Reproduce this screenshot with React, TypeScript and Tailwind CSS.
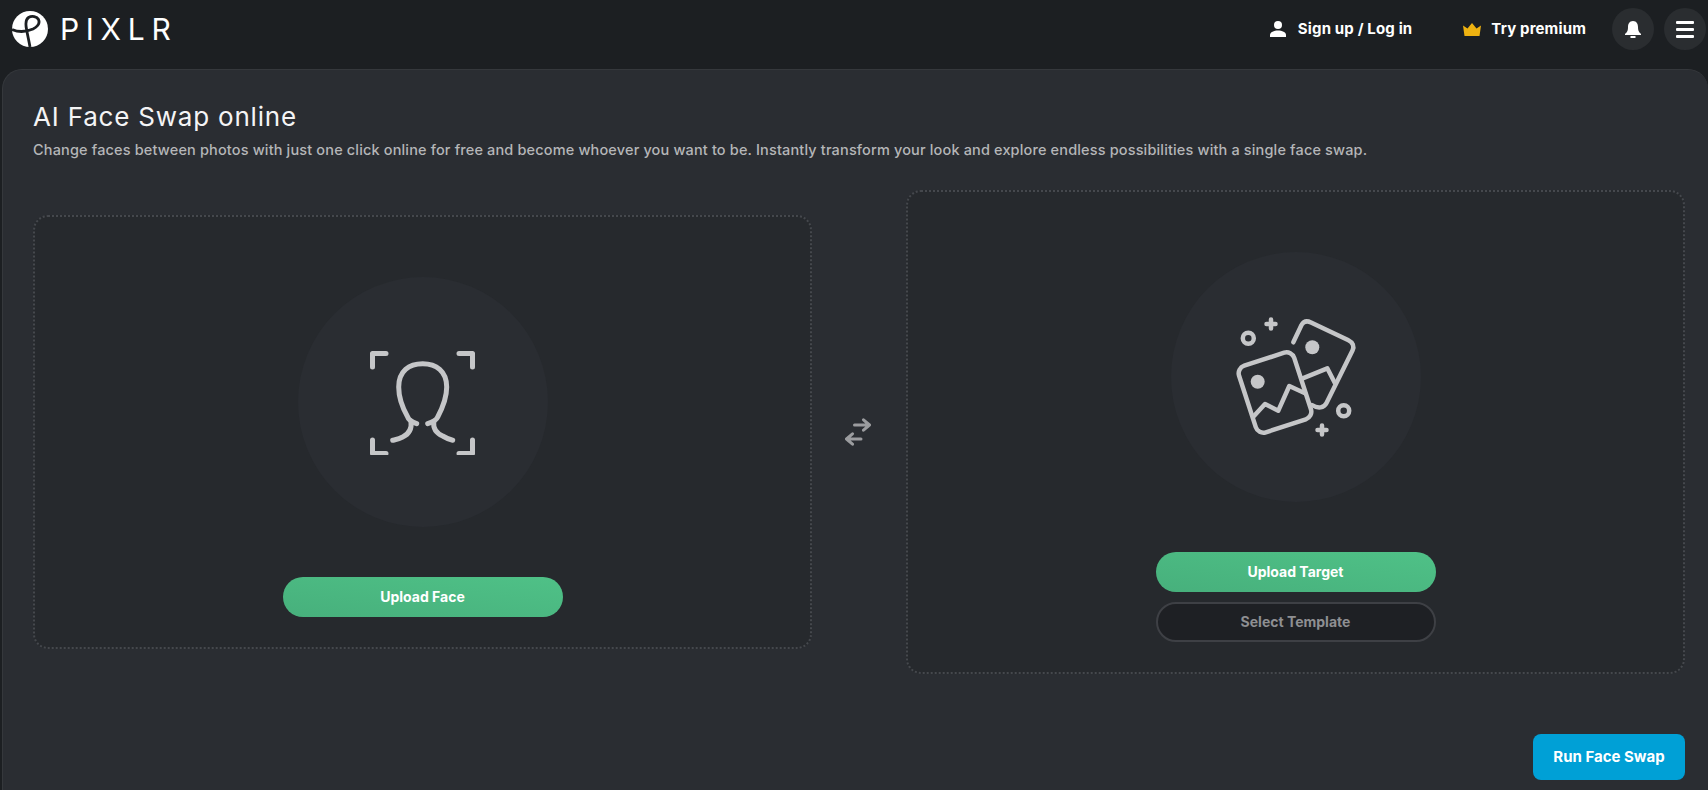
function PixlrLogo() {
  return (
    <svg width="36" height="36" viewBox="0 0 36 36" className="shrink-0">
      <circle cx="18" cy="18" r="18" fill="#fff" />
      <path d="M0 18.500C8 22 15 20.500 21 18C26 15.500 28 12 26.500 8.500C25 5.500 20 4.500 16.500 6.500C13.500 8.500 13.500 13 14.500 18C15.500 24 17 30 18 36" fill="none" stroke="#1c1f22" strokeWidth="2.800" />
    </svg>
  );
}

function FaceIcon() {
  return (
    <svg width="105" height="105" viewBox="0 -1 105 105" fill="none" stroke="#c5c6c8" strokeWidth="5" strokeLinecap="round" strokeLinejoin="round">
      <path d="M2.500 16V2.500H16M89 2.500H102.500V16M2.500 89V102.500H16M89 102.500H102.500V89" />
      <path d="M46.700 72.700C42 71 38.500 69 37.700 66C32 56 28.700 46 28.700 36C28.700 20 39 12.700 52.700 12.700C66 12.700 76.700 20 76.700 36C76.700 46 73 56 67.700 66C66.500 69 63 71 57.700 72.700" />
      <path d="M41 70C42 78 39 83 32.700 86C29 88 26 88.500 22.700 89.300M63.700 71C63 78 66 82 72.700 85C76 87 79 88.500 82.700 89.300" />
    </svg>
  );
}

function ImagesIcon() {
  return (
    <svg width="160" height="150" viewBox="6 2 160 150" fill="none" stroke="#c5c6c8" strokeWidth="4.500" strokeLinecap="round" strokeLinejoin="round">
      <circle cx="38.300" cy="38.300" r="5.500" />
      <path d="M61 19.500V28.500M56.500 24H65.500" strokeWidth="4.500" />
      <rect x="-29" y="-35" width="58" height="70" rx="8" transform="translate(65 92.500) rotate(-18)" />
      <circle cx="47.700" cy="81.700" r="7" fill="#c5c6c8" stroke="none" />
      <path d="M43.300 116.700L55 104L68.300 110.700L79.300 86L95 93.300" />
      <path d="M83.300 42.300L91.500 25C93.500 21.500 97 20.500 101 22.500L138 40C143 42.500 144.500 46.500 142.500 50.500L116.500 103C114 108 108 109 102 105" />
      <circle cx="102.300" cy="47.300" r="7" fill="#c5c6c8" stroke="none" />
      <path d="M92.700 78.300L117.300 68.300L125 83.300" />
      <circle cx="133.700" cy="110.700" r="5.500" />
      <path d="M112 125.500V134.500M107.500 130H116.500" strokeWidth="4.500" />
    </svg>
  );
}

function SwapArrows() {
  return (
    <svg width="26" height="28" viewBox="0 0 26 28" fill="none" stroke="#9b9c9f" strokeWidth="3" strokeLinecap="round" strokeLinejoin="round">
      <path d="M9.500 7H24.500M18.500 1.800L24.500 7L18.500 12.200" />
      <path d="M16 21H1.500M7.500 15.800L1.500 21L7.500 26.200" />
    </svg>
  );
}

export default function App() {
  return (
    <div className="h-[790px] overflow-hidden bg-[#1c1f22] font-['Inter',sans-serif]">
      <header className="h-[69px] flex items-start justify-between pr-[2px]">
        <div className="flex items-center pl-3 pt-[11px]">
          <PixlrLogo />
          <span className="ml-[12px] text-[30px] leading-[36px] font-normal tracking-[6.700px] text-white">PIXLR</span>
        </div>
        <div className="flex items-center pt-2">
          <div className="flex items-center gap-[12px] mr-[51px]">
            <svg width="16" height="16" viewBox="0 0 16 16" fill="#fff">
              <circle cx="8" cy="4" r="4" />
              <path d="M0 16V14C0 11 4 9.500 8 9.500C12 9.500 16 11 16 14V16Z" />
            </svg>
            <span className="text-[15px] tracking-[0.150px] font-bold text-white">Sign up / Log in</span>
          </div>
          <div className="flex items-center gap-[10px] mr-[26px]">
            <svg width="18" height="13" viewBox="0 0 18 13" fill="#eeb211">
              <path d="M0 2.500L4.500 5.500L9 0L13.500 5.500L18 2.500L16.500 13H1.500Z" />
            </svg>
            <span className="text-[15px] tracking-[0.150px] font-bold text-white">Try premium</span>
          </div>
          <div className="w-[42px] h-[42px] rounded-full bg-[#2a2d30] flex items-center justify-center mr-[10px]">
            <svg width="16" height="17" viewBox="0 0 16 17" fill="#fff">
              <path d="M8 0C11.500 0 13 3 13 6C13 10 14 11 16 13V14H0V13C2 11 3 10 3 6C3 3 4.500 0 8 0Z" />
              <rect x="5.500" y="15" width="5" height="2" />
            </svg>
          </div>
          <div className="w-[42px] h-[42px] rounded-full bg-[#2a2d30] flex items-center justify-center">
            <div className="w-[18px] flex flex-col gap-[4px]">
              <div className="h-[3px] bg-white rounded-[1px]" />
              <div className="h-[3px] bg-white rounded-[1px]" />
              <div className="h-[3px] bg-white rounded-[1px]" />
            </div>
          </div>
        </div>
      </header>

      <main className="ml-[2px] h-[721px] rounded-t-[20px] border border-b-0 border-r-0 border-[#35383c] bg-[#2a2d32] pl-[30px] pr-[23px] pt-[31px]">
        <h1 className="text-[26px] leading-[32px] tracking-[0.800px] font-normal text-[#f4f4f5]">AI Face Swap online</h1>
        <p className="mt-[7px] text-[14.500px] tracking-[0.150px] leading-[20px] font-medium text-[#b5b6b8]">
          Change faces between photos with just one click online for free and become whoever you want to be. Instantly transform your look and explore endless possibilities with a single face swap.
        </p>

        <div className="mt-[30px] h-[484px] flex items-center">
          <section className="w-[779px] h-[434px] rounded-[15px] border-2 border-dotted border-[#45484d] bg-[#26292d] flex flex-col items-center pt-[60px]">
            <div className="w-[250px] h-[250px] rounded-full bg-[#2a2d32] flex items-center justify-center">
              <FaceIcon />
            </div>
            <button className="mt-[50px] w-[280px] h-10 rounded-[20px] bg-gradient-to-tr from-[#47b07c] to-[#4fc187] text-sm font-bold text-white">Upload Face</button>
          </section>

          <div className="w-[94px] pr-[3px] flex justify-center">
            <SwapArrows />
          </div>

          <section className="w-[779px] h-[484px] rounded-[15px] border-2 border-dotted border-[#45484d] bg-[#26292d] flex flex-col items-center pt-[60px]">
            <div className="w-[250px] h-[250px] rounded-full bg-[#2a2d32] flex items-center justify-center">
              <ImagesIcon />
            </div>
            <button className="mt-[50px] w-[280px] h-10 rounded-[20px] bg-gradient-to-tr from-[#47b07c] to-[#4fc187] text-sm font-bold text-white">Upload Target</button>
            <button className="mt-[10px] w-[280px] h-10 rounded-[20px] border-2 border-[#3e4045] bg-[#1e2024] text-sm font-bold text-[#8e8f92]">Select Template</button>
          </section>
        </div>

        <div className="mt-[60px] flex justify-end">
          <button className="w-[152px] h-[46px] rounded-lg bg-[#00a0d6] text-[15px] font-bold text-white">Run Face Swap</button>
        </div>
      </main>
    </div>
  );
}
